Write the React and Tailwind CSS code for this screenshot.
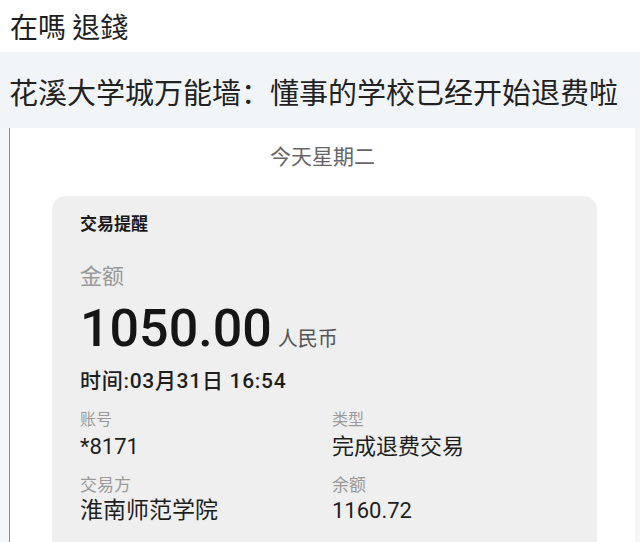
export default function App() {
  return (
    <div className="w-[640px] h-[542px] overflow-hidden bg-white font-['Roboto','Noto_Sans_CJK_SC',sans-serif]">
      <div className="h-[52px] pl-[10px] flex items-center text-[28px] text-[#1e1e1e] font-['Noto_Sans_CJK_TC',sans-serif]">
        在嗎 退錢
      </div>
      <div className="h-[76px] pl-[9px] pt-[4px] flex items-center bg-[#f2f5f8] text-[29px] text-[#222] whitespace-nowrap font-['Noto_Sans_CJK_SC',sans-serif]">
        花溪大学城万能墙：懂事的学校已经开始退费啦
      </div>
      <div className="flex h-[414px] bg-[#f4f6f8]">
        <div className="ml-[9px] w-[626px] border-l border-[#8c8c8c] bg-white flex flex-col">
          <div className="mt-[13px] leading-[28px] text-[21px] text-[#666] text-center font-['Noto_Sans_CJK_SC',sans-serif]">
            今天星期二
          </div>
          <div className="mt-[27px] ml-[42px] w-[545px] flex-1 rounded-t-[14px] bg-[#efefef] pl-[28px]">
            <div className="pt-[17px] leading-[20px] text-[17px] font-bold text-[#1a1a1a] font-['Noto_Sans_CJK_SC',sans-serif]">
              交易提醒
            </div>
            <div className="mt-[30px] leading-[22px] text-[22px] text-[#999] font-['Noto_Sans_CJK_SC',sans-serif]">
              金额
            </div>
            <div className="mt-[18px] flex items-baseline">
              <span className="leading-[52px] text-[52px] font-medium text-[#151515]">1050.00</span>
              <span className="ml-[6px] leading-none text-[20px] text-[#555] font-['Noto_Sans_CJK_SC',sans-serif]">
                人民币
              </span>
            </div>
            <div className="mt-[16px] leading-[20px] text-[21px] font-medium tracking-[0.7px] text-[#1e1e1e]">
              时间:03月31日 16:54
            </div>
            <div className="mt-[19px] grid grid-cols-[252px_1fr]">
              <div>
                <div className="leading-[20px] text-[16px] text-[#9a9a9a]">账号</div>
                <div className="mt-[5px] leading-[24px] text-[22px] text-[#1e1e1e]">*8171</div>
                <div className="mt-[16px] leading-[20px] text-[17px] text-[#9a9a9a]">交易方</div>
                <div className="mt-[3px] leading-[26px] text-[23px] text-[#1e1e1e]">淮南师范学院</div>
              </div>
              <div>
                <div className="leading-[20px] text-[16px] text-[#9a9a9a]">类型</div>
                <div className="mt-[5px] leading-[24px] text-[22px] text-[#1e1e1e]">完成退费交易</div>
                <div className="mt-[16px] leading-[20px] text-[17px] text-[#9a9a9a]">余额</div>
                <div className="mt-[3px] leading-[26px] text-[22px] text-[#1e1e1e]">1160.72</div>
              </div>
            </div>
          </div>
        </div>
      </div>
    </div>
  );
}
